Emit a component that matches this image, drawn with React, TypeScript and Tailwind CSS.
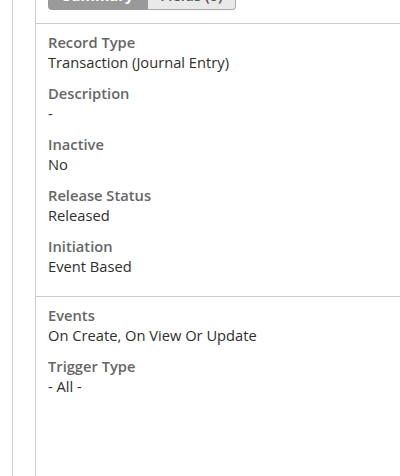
export default function App() {
  const main = [
    { label: "Record Type", value: "Transaction (Journal Entry)" },
    { label: "Description", value: "-" },
    { label: "Inactive", value: "No" },
    { label: "Release Status", value: "Released" },
    { label: "Initiation", value: "Event Based" },
  ];
  const triggers = [
    { label: "Events", value: "On Create, On View Or Update" },
    { label: "Trigger Type", value: "- All -" },
  ];

  return (
    <div
      className="w-[400px] h-[476px] bg-white overflow-hidden pl-[12px] flex"
      style={{ fontFamily: '"Open Sans", "Noto Sans", sans-serif' }}
    >
      <div className="border-l border-[#cccccc] pl-[22px] flex flex-1">
        <div className="border-l border-[#cccccc] flex-1 flex flex-col">
          {/* Tabs */}
          <div className="h-[24px] border-b border-[#cccccc] pl-[12px]">
            <div className="flex mt-[-18px] h-[28px]">
              <div className="w-[100px] bg-[#999999] text-white text-[14.7px] font-bold leading-5 pt-[3px] text-center rounded-bl-[4px]">
                Summary
              </div>
              <div className="w-[88px] bg-[#e9e9e9] border border-[#aaaaaa] border-l-0 text-[#555555] text-[14.7px] font-semibold leading-5 pt-[2px] text-center rounded-br-[4px]">
                Fields (0)
              </div>
            </div>
          </div>

          {/* Main details */}
          <div className="border-b border-[#cccccc] pl-[12px] pt-[8px] pb-[20px] flex flex-col gap-[11px]">
            {main.map((f) => (
              <Field key={f.label} {...f} />
            ))}
          </div>

          {/* Trigger details */}
          <div className="pl-[12px] pt-[8px] flex flex-col gap-[11px]">
            {triggers.map((f) => (
              <Field key={f.label} {...f} />
            ))}
          </div>
        </div>
      </div>
    </div>
  );
}

function Field({ label, value }: { label: string; value: string }) {
  return (
    <div className="flex flex-col">
      <span className="text-[14.7px] leading-5 font-semibold text-[#666666]">{label}</span>
      <span className="text-[14.7px] leading-5 text-[#2f2f2f]">{value}</span>
    </div>
  );
}
